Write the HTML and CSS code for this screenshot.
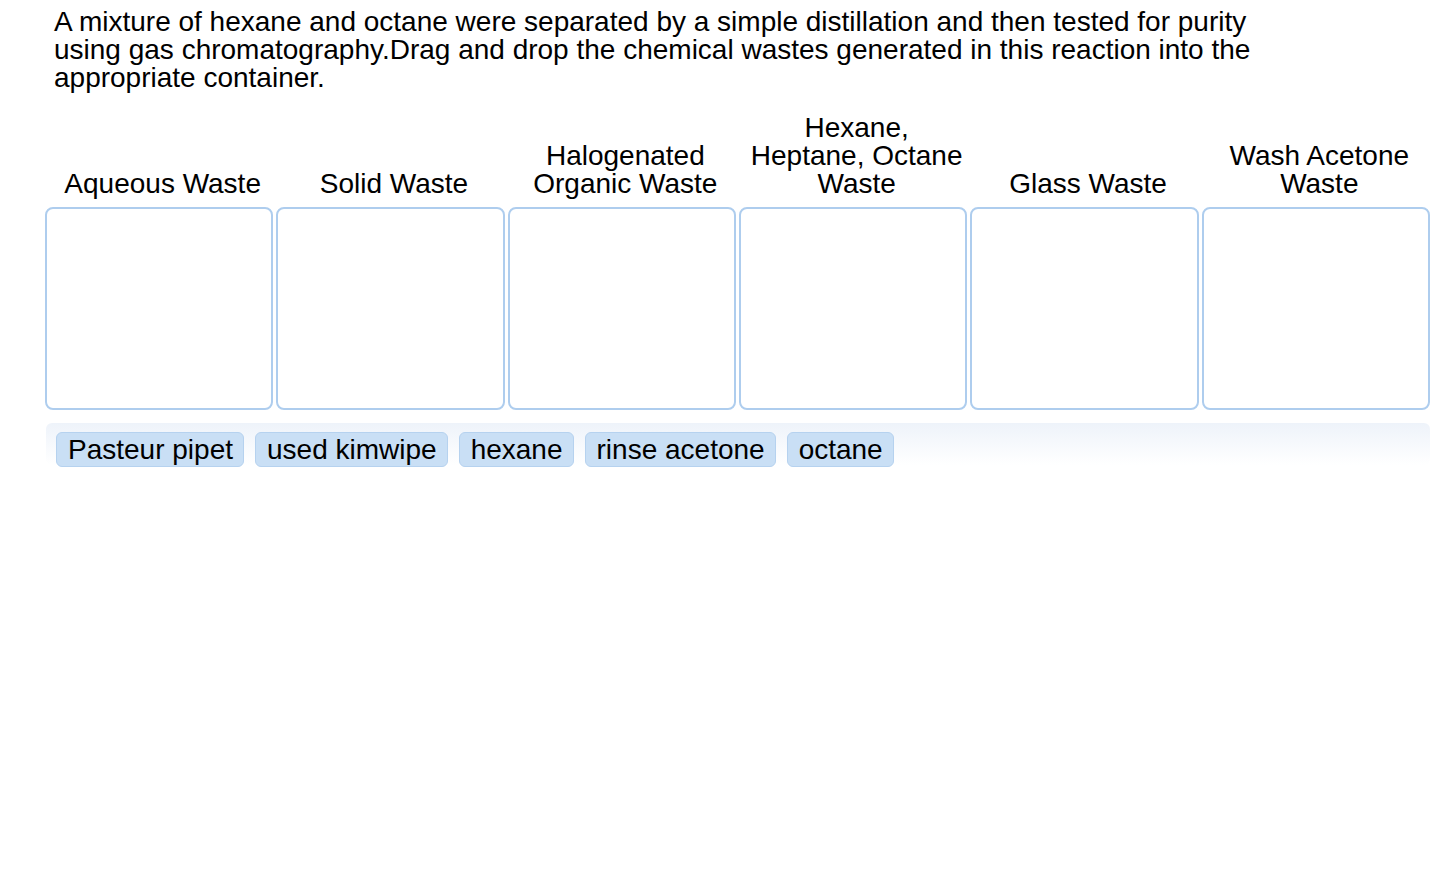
FILE: index.html
```html
<html>
<head>
    <link rel="stylesheet" href="styles.css">
</head>
<body>
    <div class="question">
        <p class="question__text">A mixture of hexane and octane were separated by a simple distillation and then tested for purity using gas chromatography.Drag and drop the chemical wastes generated in this reaction into the appropriate container.</p>

        <div class="bins">
            <div class="bin">
                <div class="bin__label">Aqueous Waste</div>
                <div class="bin__drop"></div>
            </div>
            <div class="bin">
                <div class="bin__label">Solid Waste</div>
                <div class="bin__drop"></div>
            </div>
            <div class="bin">
                <div class="bin__label">Halogenated<br>Organic Waste</div>
                <div class="bin__drop"></div>
            </div>
            <div class="bin">
                <div class="bin__label">Hexane,<br>Heptane, Octane<br>Waste</div>
                <div class="bin__drop"></div>
            </div>
            <div class="bin">
                <div class="bin__label">Glass Waste</div>
                <div class="bin__drop"></div>
            </div>
            <div class="bin">
                <div class="bin__label">Wash Acetone<br>Waste</div>
                <div class="bin__drop"></div>
            </div>
        </div>

        <ul class="tray">
            <li class="chip">Pasteur pipet</li>
            <li class="chip">used kimwipe</li>
            <li class="chip">hexane</li>
            <li class="chip">rinse acetone</li>
            <li class="chip">octane</li>
        </ul>
    </div>
</body>
</html>
```

FILE: styles.css
```css
body {
    margin: 0;
    font-family: "Liberation Sans", Arial, sans-serif;
    font-size: 28px;
    line-height: 28px;
    color: #000;
    background: #fff;
}

.question {
    width: 1385px;
    padding: 8px 0 0 45px;
}

.question__text {
    margin: 0 0 0 9px;
    width: 1220px;
}

.bins {
    display: grid;
    grid-template-columns: repeat(6, 1fr);
    column-gap: 3px;
    margin-top: 22px;
}

.bin {
    display: flex;
    flex-direction: column;
    justify-content: flex-end;
}

.bin__label {
    text-align: center;
    padding-left: 7px;
    margin-bottom: 9px;
}

.bin__drop {
    height: 199px;
    border: 2px solid #aecdee;
    border-radius: 8px;
}

ul, li {
    list-style-type: none;
    margin: 0;
    padding: 0;
}

.tray {
    display: flex;
    gap: 11px;
    margin: 13px 0 0 1px;
    padding: 9px 10px 0;
    height: 33px;
    border-radius: 6px;
    background: linear-gradient(#eef3fa, #fff);
}

.chip {
    height: 33px;
    line-height: 33px;
    padding: 0 10px 0 11px;
    background: #c9dff5;
    border: 1px solid #b6d2ef;
    border-radius: 6px;
    white-space: nowrap;
}
```
